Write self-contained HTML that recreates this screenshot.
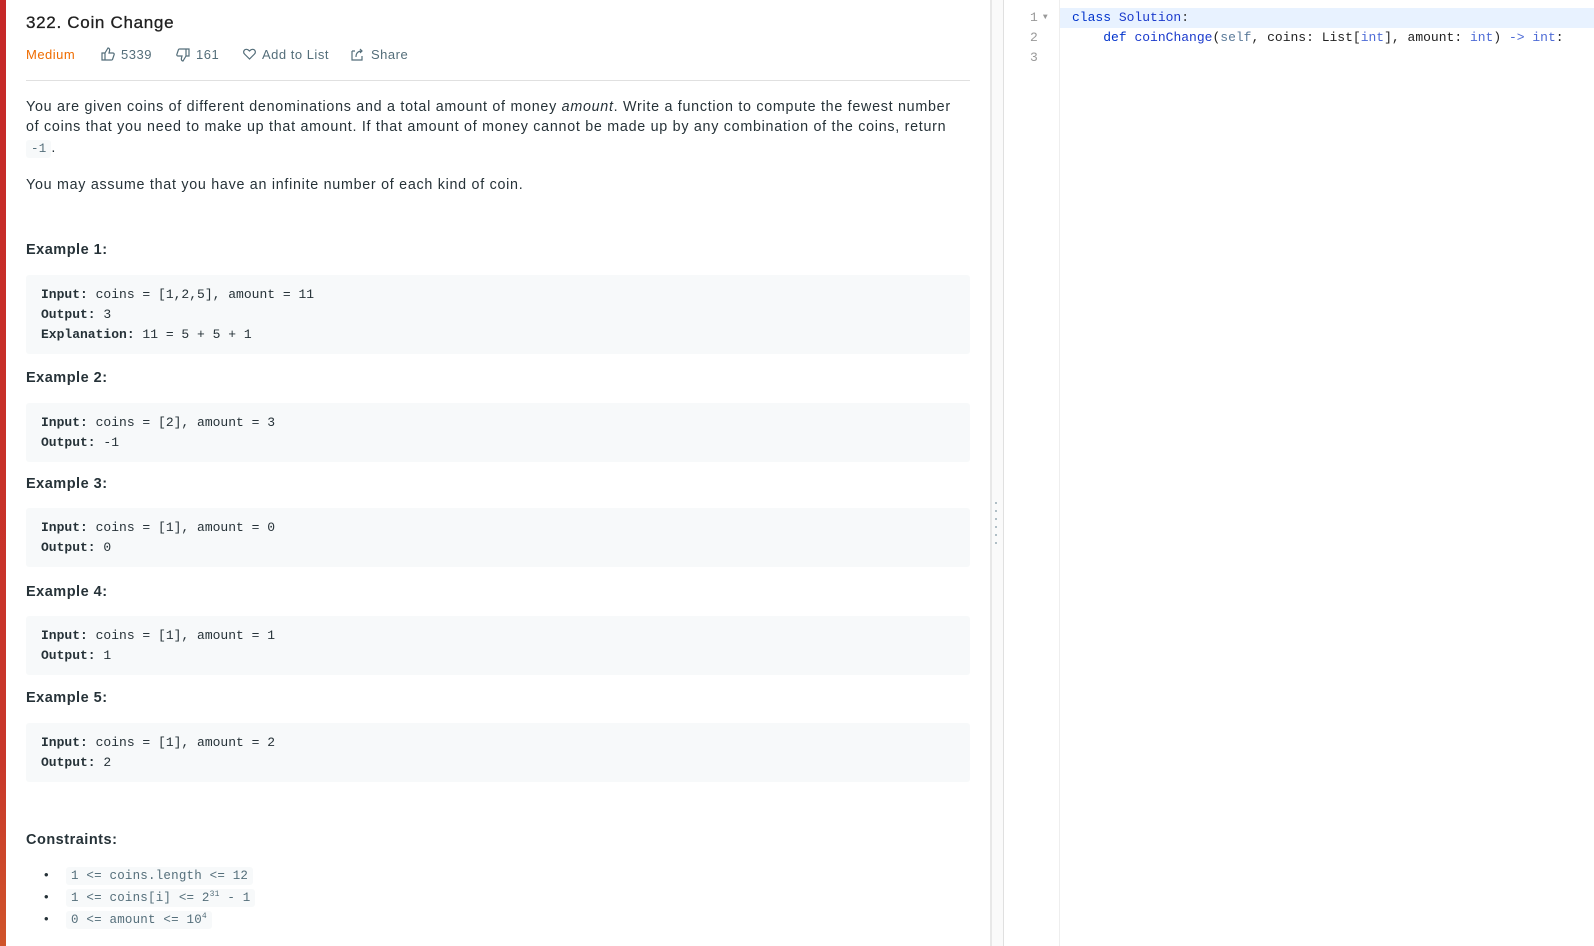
<!DOCTYPE html>
<html><head><meta charset="utf-8"><style>
*{margin:0;padding:0;box-sizing:border-box}
body{width:1594px;height:946px;overflow:hidden;background:#fff;font-family:"Liberation Sans",sans-serif;color:#263238;position:relative}
.strip{position:absolute;left:0;top:0;width:6px;height:946px;background:linear-gradient(#c62828,#c8372a 80%,#d0542a)}
.a{position:absolute;white-space:nowrap}
.title{left:26px;top:13px;font-size:17px;letter-spacing:.7px;color:#212121;-webkit-text-stroke:.3px #212121}
.meta{top:47px;font-size:13px;color:#546e7a;letter-spacing:.5px}
.hr{position:absolute;left:26px;top:80px;width:944px;height:1px;background:#e0e0e0}
.p{left:26px;font-size:14.3px;line-height:20.3px;letter-spacing:.72px}
.h{left:26px;font-size:14.5px;font-weight:bold;letter-spacing:.5px}
.pre{position:absolute;left:26px;width:944px;background:#f7f9fa;border-radius:3px;padding:10px 15px;font-family:"Liberation Mono",monospace;font-size:13px;line-height:20px;white-space:pre}
.pre b{font-weight:bold}
code{font-family:"Liberation Mono",monospace;font-size:12.5px;background:#f7f9fa;color:#546e7a;padding:2px 5px;border-radius:3px;letter-spacing:.2px}
.li{left:44px;font-size:13px}
.li span{display:inline-block;width:22px}
.ed{font-family:"Liberation Mono",monospace;font-size:13px;white-space:pre}
</style></head><body>
<div class="strip"></div>
<div class="a title">322. Coin Change</div>
<div class="a meta" style="left:26px;color:#ef6c00">Medium</div>
<div class="a meta" style="left:101px"><svg width="14" height="14" viewBox="0 0 14 14" style="vertical-align:-2px;margin-right:6px" fill="none" stroke="#546e7a" stroke-width="1.2"><path d="M1 6h3v7H1zM4 6l3-5c1 0 2 1 1.5 3L8 6h4c1 0 1.5 1 1 2l-1.5 4.5c-.3.5-.6.5-1 .5H4"/></svg>5339</div>
<div class="a meta" style="left:176px"><svg width="14" height="14" viewBox="0 0 14 14" style="vertical-align:-3px;margin-right:6px" fill="none" stroke="#546e7a" stroke-width="1.2"><path d="M13 8h-3V1h3zM10 8l-3 5c-1 0-2-1-1.5-3L6 8H2C1 8 .5 7 1 6l1.5-4.5C2.8 1 3.1 1 3.5 1H10"/></svg>161</div>
<div class="a meta" style="left:243px"><svg width="13" height="12" viewBox="0 0 13 12" style="vertical-align:-1px;margin-right:6px" fill="none" stroke="#546e7a" stroke-width="1.2"><path d="M6.5 11L1.5 6C0 4.5.5 1.5 3.3 1.3 5 1.2 6 2.5 6.5 3 7 2.5 8 1.2 9.7 1.3 12.5 1.5 13 4.5 11.5 6z"/></svg>Add to List</div>
<div class="a meta" style="left:351px"><svg width="13" height="13" viewBox="0 0 13 13" style="vertical-align:-2px;margin-right:7px" fill="none" stroke="#546e7a" stroke-width="1.2"><path d="M1 3v9h10V8M1 3h3M5 9c0-4 2-6 6-6M9 1l2 2-2 2"/></svg>Share</div>
<div class="hr"></div>
<div class="a p" style="top:97px;white-space:normal;width:935px">You are given coins of different denominations and a total amount of money <i>amount</i>. Write a function to compute the fewest number of coins that you need to make up that amount. If that amount of money cannot be made up by any combination of the coins, return <code>-1</code>.</div>
<div class="a p" style="top:175px">You may assume that you have an infinite number of each kind of coin.</div>
<div class="a h" style="top:242px">Example 1:</div>
<div class="pre" style="top:275px;height:79px"><b>Input:</b> coins = [1,2,5], amount = 11
<b>Output:</b> 3
<b>Explanation:</b> 11 = 5 + 5 + 1</div>
<div class="a h" style="top:370px">Example 2:</div>
<div class="pre" style="top:403px;height:59px"><b>Input:</b> coins = [2], amount = 3
<b>Output:</b> -1</div>
<div class="a h" style="top:476px">Example 3:</div>
<div class="pre" style="top:508px;height:59px"><b>Input:</b> coins = [1], amount = 0
<b>Output:</b> 0</div>
<div class="a h" style="top:584px">Example 4:</div>
<div class="pre" style="top:616px;height:59px"><b>Input:</b> coins = [1], amount = 1
<b>Output:</b> 1</div>
<div class="a h" style="top:690px">Example 5:</div>
<div class="pre" style="top:723px;height:59px"><b>Input:</b> coins = [1], amount = 2
<b>Output:</b> 2</div>
<div class="a h" style="top:832px">Constraints:</div>
<div class="a li" style="top:867px"><span>•</span><code>1 &lt;= coins.length &lt;= 12</code></div>
<div class="a li" style="top:889px"><span>•</span><code>1 &lt;= coins[i] &lt;= 2<sup style="font-size:8px">31</sup> - 1</code></div>
<div class="a li" style="top:911px"><span>•</span><code>0 &lt;= amount &lt;= 10<sup style="font-size:8px">4</sup></code></div>
<!-- divider -->
<div style="position:absolute;left:990px;top:0;width:2px;height:946px;background:#e8e8e8"></div>
<div style="position:absolute;left:992px;top:0;width:11px;height:946px;background:#fafafa"></div>
<div style="position:absolute;left:1003px;top:0;width:1px;height:946px;background:#e0e0e0"></div>
<div style="position:absolute;left:995px;top:502px;width:2px;height:42px;background:repeating-linear-gradient(#b0bec5 0 2px,transparent 2px 8px)"></div>
<!-- editor -->
<div style="position:absolute;left:1059px;top:0;width:1px;height:946px;background:#eee"></div>
<div style="position:absolute;left:1060px;top:8px;width:534px;height:20px;background:#e8f2ff"></div>
<div class="a ed" style="left:1030px;top:10px;color:#999">1<span style="font-size:8px;margin-left:5px;vertical-align:2px">▼</span></div>
<div class="a ed" style="left:1030px;top:30px;color:#999">2</div>
<div class="a ed" style="left:1030px;top:50px;color:#999">3</div>
<div class="a ed" style="left:1072px;top:10px;color:#1a1aa6"><span style="color:#0033cc">class</span> <span style="color:#1a3acc">Solution</span><span style="color:#333">:</span></div>
<div class="a ed" style="left:1072px;top:30px;color:#222">    <span style="color:#0033cc">def</span> <span style="color:#1a3acc">coinChange</span>(<span style="color:#5a7a99">self</span>, coins: List[<span style="color:#4d6bd6">int</span>], amount: <span style="color:#4d6bd6">int</span>) <span style="color:#4d6bd6">-&gt;</span> <span style="color:#4d6bd6">int</span>:</div>
</body></html>
